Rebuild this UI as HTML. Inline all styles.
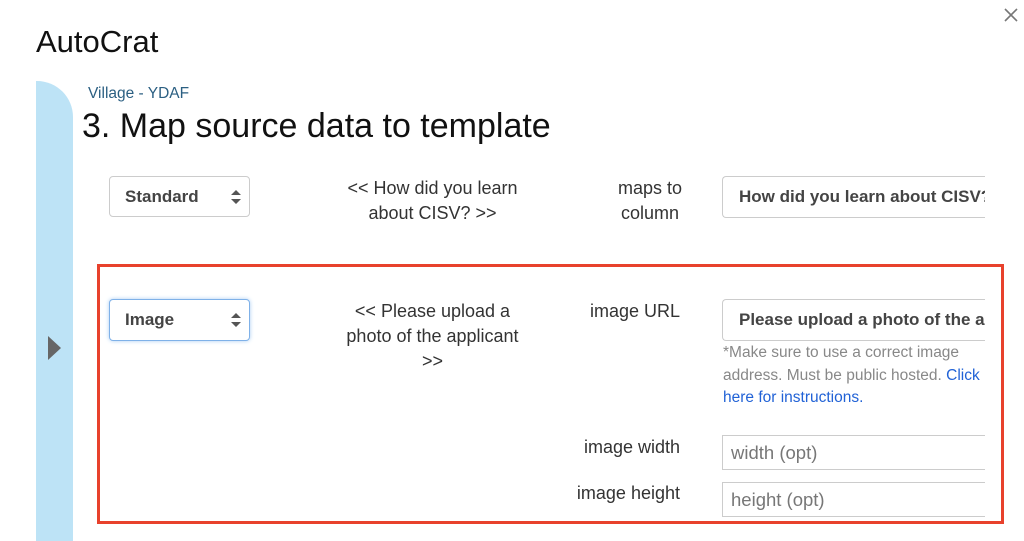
<!DOCTYPE html>
<html><head><style>
body{margin:0;width:1024px;height:531px;background:#fff;position:relative;overflow:hidden;font-family:"Liberation Sans",sans-serif;}
.a{position:absolute;}
.sel{position:absolute;border:1px solid #ccc;border-radius:4px;background:#fff;font-weight:bold;font-size:17px;color:#444;box-sizing:border-box;padding-left:15px;display:flex;align-items:center;}
.sel svg{position:absolute;right:7px;top:50%;margin-top:-8px;}
.inp{position:absolute;border:1px solid #ccc;border-right:none;box-sizing:border-box;background:#fff;color:#555;display:flex;align-items:center;}
.lbl{position:absolute;font-size:18px;color:#333;text-align:center;line-height:25px;}
</style></head><body>
<div class="a" style="left:36px;top:24px;font-size:31px;color:#111;">AutoCrat</div>
<svg class="a" style="left:1003px;top:7px" width="16" height="16"><path d="M2 2L14 14M14 2L2 14" stroke="#777" stroke-width="1.6"/></svg>
<div class="a" style="left:36px;top:81px;width:37px;height:460px;background:#bde3f6;border-top-right-radius:36px;"></div>
<svg class="a" style="left:48px;top:336px" width="14" height="24"><path d="M0 0L13 12L0 24Z" fill="#666"/></svg>
<div class="a" style="left:88px;top:85px;font-size:15.5px;color:#2b5f82;">Village - YDAF</div>
<div class="a" style="left:82px;top:107px;font-size:34px;color:#111;">3. Map source data to template</div>

<div class="sel" style="left:109px;top:176px;width:141px;height:41px;">Standard<svg width="12" height="16"><path d="M1 6L6 1L11 6ZM1 10L6 15L11 10Z" fill="#555"/></svg></div>
<div class="lbl" style="left:320px;top:176px;width:225px;">&lt;&lt; How did you learn<br>about CISV? &gt;&gt;</div>
<div class="lbl" style="left:595px;top:176px;width:110px;">maps to<br>column</div>
<div class="inp" style="left:722px;top:176px;width:263px;height:42px;border-radius:4px 0 0 4px;padding-left:16px;font-weight:bold;font-size:17px;color:#444;white-space:nowrap;overflow:hidden;">How did you learn about CISV?</div>

<div class="a" style="left:97px;top:264px;width:901px;height:254px;border:3px solid #e8412c;"></div>
<div class="sel" style="left:109px;top:299px;width:141px;height:42px;border-color:#7fb1e8;box-shadow:0 0 4px #a9cdf3;">Image<svg width="12" height="16"><path d="M1 6L6 1L11 6ZM1 10L6 15L11 10Z" fill="#555"/></svg></div>
<div class="lbl" style="left:320px;top:299px;width:225px;">&lt;&lt; Please upload a<br>photo of the applicant<br>&gt;&gt;</div>
<div class="lbl" style="left:540px;top:299px;width:140px;text-align:right;">image URL</div>
<div class="inp" style="left:722px;top:299px;width:263px;height:42px;border-radius:4px 0 0 4px;padding-left:16px;font-weight:bold;font-size:17px;color:#444;white-space:nowrap;overflow:hidden;">Please upload a photo of the applicant</div>
<div class="a" style="left:723px;top:342px;width:268px;font-size:15.5px;line-height:22.5px;color:#888;">*Make sure to use a correct image address. Must be public hosted. <span style="color:#2162d6">Click here for instructions.</span></div>
<div class="lbl" style="left:520px;top:435px;width:160px;text-align:right;">image width</div>
<div class="inp" style="left:722px;top:435px;width:263px;height:35px;padding-left:8px;font-size:18.5px;color:#777;">width (opt)</div>
<div class="lbl" style="left:520px;top:481px;width:160px;text-align:right;">image height</div>
<div class="inp" style="left:722px;top:482px;width:263px;height:35px;padding-left:8px;font-size:18.5px;color:#777;">height (opt)</div>
</body></html>
